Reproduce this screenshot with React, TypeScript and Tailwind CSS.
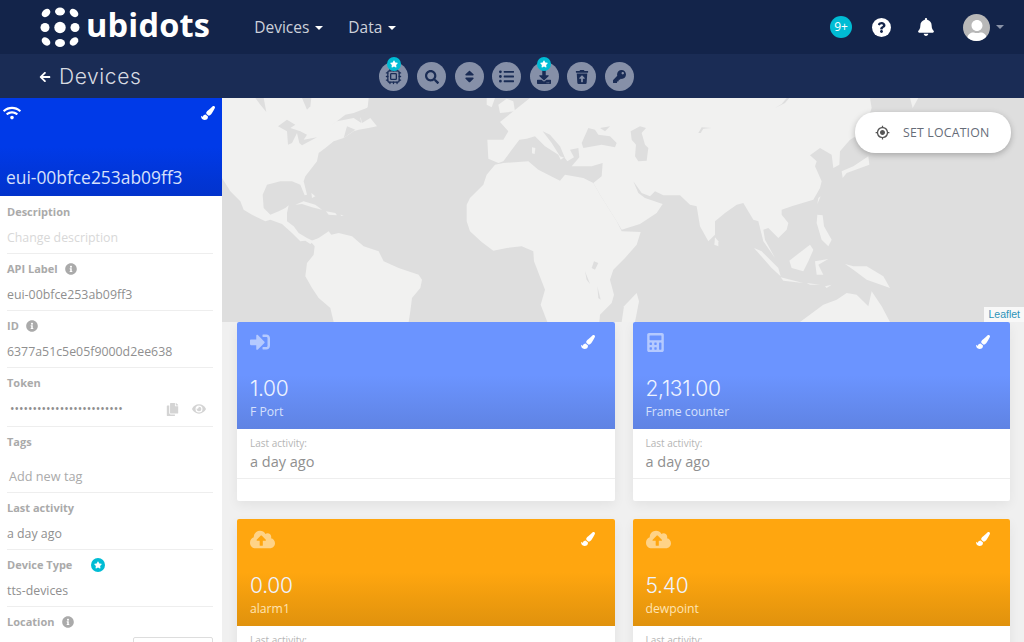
import { Cpu } from "lucide-react";
import {
  FaArrowLeft,
  FaBell,
  FaCalculator,
  FaCloudUploadAlt,
  FaCopy,
  FaDownload,
  FaEye,
  FaInfoCircle,
  FaKey,
  FaListUl,
  FaPaintBrush,
  FaQuestion,
  FaSearch,
  FaSignInAlt,
  FaSort,
  FaStar,
  FaTrashRestore,
  FaUser,
  FaWifi,
} from "react-icons/fa";
import { MdGpsFixed } from "react-icons/md";

const sans = "font-['Open_Sans',sans-serif]";
const wide = "font-['Inter',sans-serif]";

const StarBadge = ({ className }: { className: string }) => (
  <span className={`flex items-center justify-center rounded-full bg-[#00bcd4] text-white ${className}`}>
    <FaStar size={8} />
  </span>
);

const Caret = ({ className = "border-t-white" }: { className?: string }) => (
  <span className={`inline-block border-x-[4px] border-t-[4px] border-x-transparent ${className}`} />
);

const Logo = () => (
  <div className="flex items-center gap-[5px]">
    <svg width="41" height="41" viewBox="0 0 41 41" className="text-white" fill="currentColor">
      <ellipse cx="6" cy="6" rx="4.800" ry="3.600" transform="rotate(-40 6 6)" />
      <ellipse cx="20" cy="4.500" rx="5" ry="4" />
      <ellipse cx="34" cy="6" rx="4.800" ry="3.600" transform="rotate(40 34 6)" />
      <circle cx="5" cy="20.500" r="4.500" />
      <circle cx="20" cy="20.500" r="5.700" />
      <circle cx="35" cy="20.500" r="4.500" />
      <ellipse cx="6" cy="34.500" rx="4.800" ry="3.600" transform="rotate(40 6 34.500)" />
      <ellipse cx="20" cy="36" rx="5" ry="4" />
      <ellipse cx="34" cy="34.500" rx="4.800" ry="3.600" transform="rotate(-40 34 34.500)" />
    </svg>
    <span className="pb-[3px] font-['Open_Sans',sans-serif] text-[32.500px] leading-none font-bold tracking-[0.2px] text-white">ubidots</span>
  </div>
);

const TopBar = () => (
  <header className={`flex h-[54px] items-center bg-[#13244a] pr-[20px] pl-[40px] ${sans}`}>
    <Logo />
    <nav className="ml-[44px] flex items-center gap-[25px] pt-[1px] text-[15.500px] text-[#cdd1da]">
      <span className="flex items-center gap-[6px]">
        Devices <Caret />
      </span>
      <span className="flex items-center gap-[6px]">
        Data <Caret />
      </span>
    </nav>
    <div className="ml-auto flex items-center">
      <span className="flex h-[22px] w-[22px] items-center justify-center rounded-full bg-[#00bcd4] text-[12px] text-white">9+</span>
      <span className="ml-[19.500px] flex h-[19px] w-[19px] items-center justify-center rounded-full bg-white text-[#13244a]">
        <FaQuestion size={11} />
      </span>
      <FaBell size={18} className="ml-[26.500px] text-white" />
      <span className="ml-[28px] flex h-[27px] w-[27px] items-end justify-center overflow-hidden rounded-full bg-[#b8b8b8] text-white">
        <FaUser size={22} className="translate-y-[1px]" />
      </span>
      <Caret className="ml-[6px] border-t-[#8a93a8]" />
    </div>
  </header>
);

const tools = [
  { icon: <Cpu size={17} strokeWidth={1.8} />, star: true },
  { icon: <FaSearch size={14} /> },
  { icon: <FaSort size={15} /> },
  { icon: <FaListUl size={15} /> },
  { icon: <FaDownload size={14} />, star: true },
  { icon: <FaTrashRestore size={14} /> },
  { icon: <FaKey size={13} /> },
];

const SubBar = () => (
  <div className="flex h-[44px] items-center bg-[#1a2c55] pl-[39px]">
    <FaArrowLeft size={12} className="mt-[1px] text-white" />
    <span className={`mt-[1px] ml-[8px] text-[21px] font-light tracking-[0.6px] text-[#d8dbe2] ${wide}`}>Devices</span>
    <div className="ml-[238px] flex items-center gap-[8.600px] pt-[1px]">
      {tools.map((tool, i) => (
        <span key={i} className="relative flex h-[29px] w-[29px] items-center justify-center rounded-full bg-[#8690a8] text-[#1a2c55]">
          {tool.icon}
          {tool.star && <StarBadge className="absolute top-[-5px] left-[7.500px] h-[14px] w-[14px]" />}
        </span>
      ))}
    </div>
  </div>
);

const Info = () => <FaInfoCircle size={12} className="ml-[7px] text-[#aaaaaa]" />;

const Field = ({
  label,
  extra,
  height = "h-[57px]",
  children,
}: {
  label: string;
  extra?: React.ReactNode;
  height?: string;
  children?: React.ReactNode;
}) => (
  <div className={`mr-[9px] ml-[7px] border-b border-[#eeeeee] pt-[8px] ${height}`}>
    <div className="flex h-[14px] items-center text-[11px] font-bold text-[#aaaaaa]">
      {label}
      {extra}
    </div>
    {children}
  </div>
);

const Value = ({ children }: { children: React.ReactNode }) => (
  <div className="mt-[9px] text-[12.350px] leading-[20px] text-[#8f8f8f]">{children}</div>
);

const Sidebar = () => (
  <aside className={`h-full w-[222px] shrink-0 bg-white ${sans}`}>
    <div className="mb-[1px] flex h-[98px] flex-col bg-gradient-to-b from-[#003ae8] from-50% to-[#0233cc] pt-[6px] pr-[7px] pb-[7px] pl-[3px] text-white">
      <div className="flex items-start justify-between">
        <FaWifi size={18} />
        <FaPaintBrush size={14} className="mt-[2px]" />
      </div>
      <div className="mt-auto pl-[3px] text-[17.400px] leading-[24px] text-[#d6e0fb]">eui-00bfce253ab09ff3</div>
    </div>
    <Field label="Description">
      <Value>
        <span className="text-[#d8d8d8]">Change description</span>
      </Value>
    </Field>
    <Field label="API Label" extra={<Info />}>
      <Value>eui-00bfce253ab09ff3</Value>
    </Field>
    <Field label="ID" extra={<Info />}>
      <Value>6377a51c5e05f9000d2ee638</Value>
    </Field>
    <Field label="Token" height="h-[59px]">
      <div className="mt-[9px] flex h-[20px] items-center text-[#d4d4d4]">
        <span className="pl-[3px] text-[12px] text-[#8f8f8f]">•••••••••••••••••••••••••</span>
        <FaCopy size={13} className="ml-auto" />
        <FaEye size={14} className="mr-[7px] ml-[13px]" />
      </div>
    </Field>
    <Field label="Tags" height="h-[66px]">
      <div className="mt-[17px] pl-[2px] text-[12.700px] leading-[20px] text-[#aaaaaa]">Add new tag</div>
    </Field>
    <Field label="Last activity">
      <Value>a day ago</Value>
    </Field>
    <Field label="Device Type" extra={<StarBadge className="ml-[19px] h-[14px] w-[14px]" />}>
      <Value>tts-devices</Value>
    </Field>
    <div className="mr-[9px] ml-[7px] pt-[8px]">
      <div className="flex h-[14px] items-center text-[11px] font-bold text-[#aaaaaa]">
        Location
        <Info />
      </div>
      <div className="mt-[8px] ml-[126px] h-[20px] w-[80px] rounded-[2px] border border-[#dddddd]" />
    </div>
  </aside>
);

// world map traced by hand, 3 units per screen pixel; the second group starts at x=248px
const WorldMap = () => (
  <svg viewBox="0 0 2406 672" preserveAspectRatio="none" className="h-full w-full bg-[#dedede]">
    <g fill="#f1f1f0">
      <path d="M0,0 L440,0 L437,28 L415,55 L420,75 L445,60 L465,85 L440,90 L410,95 L395,100 L365,120 L335,130 L310,150 L290,165 L285,190 L250,235 L245,250 L255,290 L248,292 L235,260 L210,250 L175,250 L135,260 L122,290 L125,330 L145,350 L170,340 L190,330 L200,322 L195,345 L195,370 L215,385 L230,405 L255,420 L275,430 L265,438 L250,428 L235,430 L210,405 L180,378 L145,365 L130,370 L90,350 L65,335 L55,310 L25,280 L0,240 Z" />
      <path d="M265,430 L290,420 L320,400 L328,410 L350,405 L390,415 L425,445 L470,460 L485,490 L530,510 L590,530 L600,545 L595,570 L570,600 L565,640 L560,672 L335,672 L325,630 L290,600 L270,570 L250,535 L255,495 L275,470 L278,445 Z" />
      <path d="M220,320 L245,310 L280,320 L300,335 L270,328 L240,318 Z" />
      <path d="M312,340 L340,345 L345,352 L320,350 Z" />
      <path d="M355,350 L365,352 L358,354 Z" />
      <path d="M268,285 L280,295 L270,300 Z" />
    </g>
    <g fill="#dedede">
      <path d="M100,0 L125,0 L133,42 L115,20 Z" />
      <path d="M240,0 L268,0 L265,25 L255,35 Z" />
      <path d="M168,85 L195,65 L220,80 L205,90 L235,100 L255,110 L245,125 L285,118 L240,142 L232,135 L225,105 L210,135 L198,140 L195,100 Z" />
      <path d="M325,85 L370,50 L395,45 L440,28 L415,60 L418,75 L395,60 L345,70 Z" />
      <path d="M375,85 L400,95 L365,120 Z" />
    </g>
    <g transform="translate(744 0)">
      <g fill="#f1f1f0">
        <path d="M180,0 L1200,0 L1205,30 L1195,60 L1165,110 L1140,125 L1110,160 L1108,200 L1090,210 L1085,170 L1050,150 L1020,172 L1040,190 L1035,205 L1055,250 L1050,270 L1030,305 L965,325 L935,335 L935,350 L955,375 L950,395 L925,420 L895,390 L880,395 L885,425 L915,480 L880,430 L865,370 L850,365 L820,315 L800,320 L765,345 L735,370 L735,410 L715,430 L690,385 L680,325 L660,320 L630,292 L580,292 L555,280 L540,295 L515,285 L490,250 L505,285 L525,300 L578,318 L560,345 L510,378 L455,395 L440,370 L415,330 L390,290 L370,255 L395,235 L398,195 L365,205 L305,205 L328,178 L325,150 L300,155 L312,178 L292,190 L283,178 L272,185 L265,170 L225,145 L195,115 L170,122 L148,125 L122,160 L100,190 L85,195 L55,182 L52,125 L100,125 L115,100 L90,72 L130,40 Z" />
        <path d="M370,255 L390,290 L415,330 L440,370 L455,400 L512,402 L500,440 L465,480 L430,515 L420,545 L432,590 L425,615 L390,650 L388,672 L232,672 L212,620 L225,575 L192,490 L190,460 L155,445 L110,450 L70,458 L35,432 L0,400 L-10,370 L-10,320 L0,300 L40,260 L50,230 L75,200 L100,195 L175,190 L205,215 L270,248 L285,230 L340,240 Z" />
        <path d="M85,20 L110,2 L130,10 L135,40 L90,45 Z" />
        <path d="M50,0 L75,0 L65,28 L50,20 Z" />
        <path d="M186,148 L196,150 L194,168 L186,166 Z" />
        <path d="M500,585 L507,610 L495,672 L455,672 L462,625 Z" />
        <path d="M735,418 L745,430 L745,445 L733,440 Z" />
        <path d="M852,450 L875,460 L925,510 L932,535 L905,510 Z" />
        <path d="M932,538 L1000,555 L940,548 Z" />
        <path d="M958,488 L1020,440 L1030,455 L1015,490 L1000,520 L965,510 Z" />
        <path d="M1035,490 L1075,483 L1045,500 L1060,530 L1040,530 Z" />
        <path d="M1042,350 L1058,352 L1062,385 L1085,425 L1075,445 L1055,425 L1040,375 Z" />
        <path d="M1045,300 L1052,295 L1042,318 Z" />
        <path d="M1115,220 L1150,205 L1195,175 L1198,200 L1130,225 L1118,240 Z" />
        <path d="M1125,498 L1150,505 L1190,505 L1240,535 L1260,570 L1190,545 L1150,515 Z" />
        <path d="M990,672 L1060,620 L1100,605 L1130,585 L1160,590 L1195,625 L1205,580 L1235,625 L1260,672 Z" />
        <path d="M1065,565 L1085,560 L1070,570 Z" />
        <path d="M1010,555 L1050,560 L1020,560 Z" />
        <path d="M1320,0 L1345,0 L1328,30 Z" />
      </g>
      <g fill="#dedede">
        <path d="M218,100 L240,110 L270,145 L285,180 L270,175 L245,135 Z" />
        <path d="M335,135 L355,90 L375,95 L385,110 L420,115 L440,135 L435,148 L395,140 L340,150 Z" />
        <path d="M390,90 L420,85 L405,100 Z" />
        <path d="M482,100 L510,85 L528,90 L515,105 L525,140 L535,150 L530,188 L505,190 L495,175 L498,140 L485,125 Z" />
        <path d="M685,105 L695,88 L725,90 L700,92 L692,105 Z" />
        <path d="M915,30 L945,15 L958,0 L950,0 L935,18 Z" />
        <path d="M365,510 L372,490 L385,495 L375,515 Z" />
        <path d="M345,520 L360,558 L350,545 Z" />
        <path d="M382,565 L392,605 L385,600 Z" />
      </g>
    </g>
  </svg>
);

const MapPanel = () => (
  <div className="relative h-[224px]">
    <WorldMap />
    <div className={`absolute top-[14px] right-[13px] flex h-[41px] w-[156px] items-center rounded-[20px] bg-white pl-[20px] text-[#666c78] shadow-[0_2px_6px_rgba(0,0,0,0.25)] ${sans}`}>
      <MdGpsFixed size={15} className="text-[#555555]" />
      <span className="mt-[2px] ml-[13px] text-[12.300px] tracking-[0.200px]">SET LOCATION</span>
    </div>
    <span className="absolute right-0 bottom-0 bg-white/80 pr-[4px] pl-[4px] font-['Liberation_Sans',sans-serif] text-[10.500px] leading-[15px] text-[#2b93b8]">Leaflet</span>
  </div>
);

type Variable = {
  value: string;
  name: string;
  icon: React.ReactNode;
  gradient: string;
  labelColor: string;
};

const blue = "from-[#6b94ff] from-50% to-[#5f83e3]";
const orange = "from-[#ffa60f] from-50% to-[#e0920d]";

const variables: Variable[] = [
  { value: "1.00", name: "F Port", icon: <FaSignInAlt size={20} />, gradient: blue, labelColor: "text-[#d5e0fc]" },
  { value: "2,131.00", name: "Frame counter", icon: <FaCalculator size={19} />, gradient: blue, labelColor: "text-[#d5e0fc]" },
  { value: "0.00", name: "alarm1", icon: <FaCloudUploadAlt size={25} />, gradient: orange, labelColor: "text-[#ffe4b3]" },
  { value: "5.40", name: "dewpoint", icon: <FaCloudUploadAlt size={25} />, gradient: orange, labelColor: "text-[#ffe4b3]" },
];

const VariableCard = ({ variable }: { variable: Variable }) => (
  <div className={`rounded-[2px] bg-white shadow-[0_4px_12px_rgba(0,0,0,0.06)] ${sans}`}>
    <div className={`h-[107px] rounded-t-[2px] bg-gradient-to-b px-[13px] pt-[9px] ${variable.gradient}`}>
      <div className="flex h-[22px] items-center justify-between">
        <span className="text-white/50">{variable.icon}</span>
        <FaPaintBrush size={14} className="mr-[7px] text-white" />
      </div>
      <div className={`mt-[21px] text-[21px] leading-[30px] font-light tracking-[-0.3px] text-[#eef3ff] ${wide}`}>{variable.value}</div>
      <div className={`mt-[-1px] text-[12.200px] leading-[18px] ${variable.labelColor}`}>{variable.name}</div>
    </div>
    <div className="border-b border-[#eeeeee] px-[13px] pt-[7px] pb-[5px]">
      <div className="text-[10px] leading-[15px] text-[#b5b5b5]">Last activity:</div>
      <div className="text-[14.500px] leading-[22px] text-[#8f8f8f]">a day ago</div>
    </div>
    <div className="h-[22px]" />
  </div>
);

export default function App() {
  return (
    <div className="flex h-[642px] w-[1024px] flex-col overflow-hidden bg-[#f0f0f0]">
      <TopBar />
      <SubBar />
      <div className="flex min-h-0 flex-1">
        <Sidebar />
        <main className="min-w-0 flex-1">
          <MapPanel />
          <div className="grid grid-cols-2 gap-[18px] pr-[14px] pl-[15px]">
            {variables.map((variable) => (
              <VariableCard key={variable.name} variable={variable} />
            ))}
          </div>
        </main>
      </div>
    </div>
  );
}
